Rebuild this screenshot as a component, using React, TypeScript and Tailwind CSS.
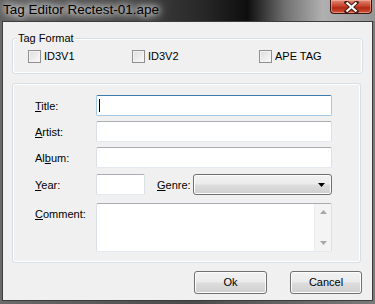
import React from "react"

function CheckBox({ label, className }: { label: string; className?: string }) {
  return (
    <div className={"flex items-center " + (className ?? "")}>
      <div className="w-[13px] h-[13px] border border-[#8f8f8f] bg-gradient-to-br from-[#dcdcdc] to-[#fbfbfb] shadow-[inset_0_0_0_1px_#f4f4f4]" />
      <span className="ml-[3px] text-[11px] text-black leading-none">{label}</span>
    </div>
  )
}

function TextBox({ className, focused }: { className?: string; focused?: boolean }) {
  return (
    <div
      className={
        "relative bg-white rounded-[2px] border " +
        (focused
          ? "border-[#a4c9e3] border-t-[#3d7bad] "
          : "border-[#e3e9ef] border-t-[#abadb3] border-l-[#dbdfe6] border-r-[#dbdfe6] ") +
        (className ?? "")
      }
    >
      {focused && <div className="absolute left-[2px] top-[3px] w-px h-[13px] bg-black" />}
    </div>
  )
}

function Label({ children, className }: { children: React.ReactNode; className?: string }) {
  return <div className={"text-[11px] text-black leading-none " + (className ?? "")}>{children}</div>
}

function Button({ label, className }: { label: string; className?: string }) {
  return (
    <div
      className={
        "h-[23px] flex items-center justify-center rounded-[3px] border border-[#707070] text-[11px] text-black shadow-[inset_0_0_0_1px_#fcfcfc] bg-[linear-gradient(#f2f2f2_0%,#ebebeb_48%,#dddddd_52%,#cfcfcf_100%)] " +
        (className ?? "")
      }
    >
      {label}
    </div>
  )
}

export default function App() {
  return (
    <div className="w-[375px] h-[304px] flex flex-col overflow-hidden bg-[linear-gradient(to_right,#6a6a6a,#4a4a4a_50%,#7a7a7a)] font-['Liberation_Sans',Arial,sans-serif]">
      {/* title bar */}
      <div className="h-[21px] flex items-start justify-between bg-[linear-gradient(to_right,#5e5e5e_0%,#424242_35%,#262626_55%,#0e0e0e_66%,#707070_76%,#b0b0b0_86%,#959595_100%)]">
        <span className="ml-[3px] mt-[2px] text-[13.5px] leading-[16px] text-black [text-shadow:0_0_6px_#fff,0_0_10px_#fff,0_0_16px_#ddd]">
          Tag Editor Rectest-01.ape
        </span>
        <div className="mr-[3px] w-[42px] h-[14px] rounded-b-[4px] border border-t-0 border-[#3a1410] bg-[linear-gradient(#e08a76_0%,#c8462e_45%,#b02a14_60%,#d2543a_100%)] flex items-center justify-center shadow-[inset_0_0_0_1px_rgba(255,200,180,0.5)]">
          <svg width="15" height="12" viewBox="0 0 15 12">
            <path d="M2.5 1.5 L12.5 10.5 M12.5 1.5 L2.5 10.5" stroke="#4a1e16" strokeWidth="4.2" strokeLinecap="square" />
            <path d="M2.5 1.5 L12.5 10.5 M12.5 1.5 L2.5 10.5" stroke="#fff" strokeWidth="2.2" />
          </svg>
        </div>
      </div>

      {/* client area */}
      <div className="mx-[2px] mb-[3px] flex-1 border border-[#3c3c3c] bg-[#f0f0f0] flex flex-col">
        {/* Tag Format group */}
        <div className="relative ml-[9px] mt-[16px] w-[351px] h-[36px] rounded-[3px] border border-[#d5dfe5] shadow-[inset_0_0_0_1px_#fff]">
          <span className="absolute -top-[7px] left-[4px] px-[1px] bg-[#f0f0f0] text-[11px] leading-[13px] text-black">
            Tag Format
          </span>
          <div className="flex items-center pl-[15px] pt-[11px]">
            <CheckBox label="ID3V1" className="w-[104px]" />
            <CheckBox label="ID3V2" className="w-[127px]" />
            <CheckBox label="APE TAG" />
          </div>
        </div>

        {/* fields group */}
        <div className="ml-[9px] mt-[9px] w-[349px] h-[180px] rounded-[3px] border border-[#d5dfe5] shadow-[inset_0_0_0_1px_#fff] pl-[22px] pt-[11px] flex flex-col">
          <div className="flex items-center h-[21px]">
            <Label className="w-[61px] pt-[2px]">
              <u>T</u>itle:
            </Label>
            <TextBox focused className="w-[236px] h-[21px]" />
          </div>
          <div className="flex items-center h-[21px] mt-[5px]">
            <Label className="w-[61px] pt-[2px]">
              <u>A</u>rtist:
            </Label>
            <TextBox className="w-[236px] h-[21px]" />
          </div>
          <div className="flex items-center h-[21px] mt-[5px]">
            <Label className="w-[61px] pt-[2px]">
              Al<u>b</u>um:
            </Label>
            <TextBox className="w-[236px] h-[21px]" />
          </div>
          <div className="flex items-center h-[21px] mt-[6px]">
            <Label className="w-[61px] pt-[2px]">
              <u>Y</u>ear:
            </Label>
            <TextBox className="w-[49px] h-[21px]" />
            <Label className="ml-[12px] w-[36px] pt-[2px]">
              <u>G</u>enre:
            </Label>
            <div className="w-[139px] h-[21px] rounded-[3px] border border-[#707070] shadow-[inset_0_0_0_1px_#fcfcfc] bg-[linear-gradient(#f2f2f2_0%,#ebebeb_48%,#dddddd_52%,#cfcfcf_100%)] flex items-center justify-end pr-[6px]">
              <svg width="7" height="4" viewBox="0 0 7 4">
                <path d="M0 0 H7 L3.5 4 Z" fill="#000" />
              </svg>
            </div>
          </div>
          <div className="flex items-start mt-[8px]">
            <Label className="w-[61px] pt-[6px]">
              <u>C</u>omment:
            </Label>
            <div className="w-[236px] h-[49px] bg-white rounded-[2px] border border-[#e3e9ef] border-t-[#abadb3] border-l-[#dbdfe6] border-r-[#dbdfe6] flex justify-end">
              <div className="w-[17px] h-full bg-[#f4f4f4] border-l border-[#ececec] flex flex-col items-center justify-between py-[6px]">
                <svg width="7" height="4" viewBox="0 0 7 4">
                  <path d="M0 4 H7 L3.5 0 Z" fill="#a8a8a8" />
                </svg>
                <svg width="7" height="4" viewBox="0 0 7 4">
                  <path d="M0 0 H7 L3.5 4 Z" fill="#a8a8a8" />
                </svg>
              </div>
            </div>
          </div>
        </div>

        {/* buttons */}
        <div className="flex justify-end mt-[8px] pr-[10px] gap-[23px]">
          <Button label="Ok" className="w-[73px]" />
          <Button label="Cancel" className="w-[72px]" />
        </div>
      </div>
    </div>
  )
}
